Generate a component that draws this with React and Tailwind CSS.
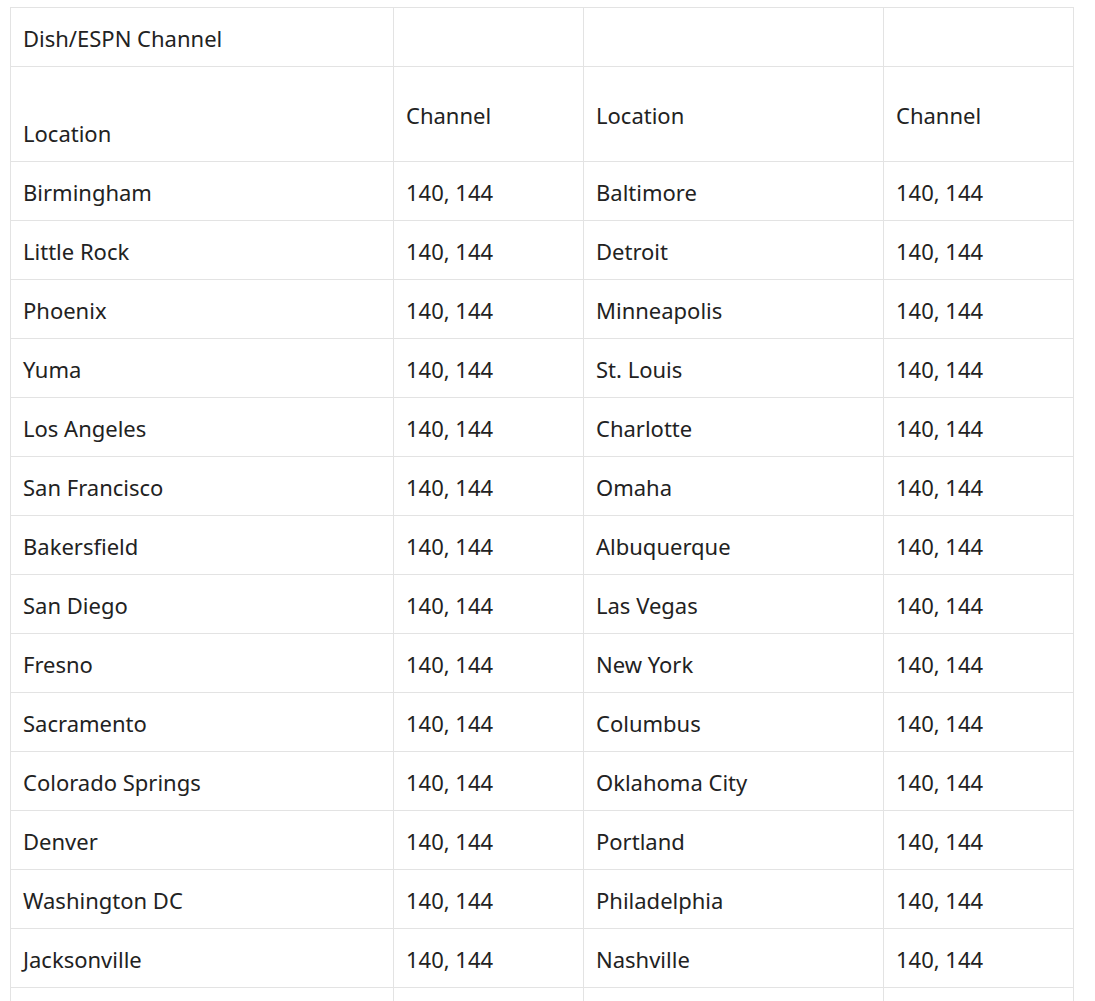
const ROWS = [
  ['Birmingham', '140, 144', 'Baltimore', '140, 144'],
  ['Little Rock', '140, 144', 'Detroit', '140, 144'],
  ['Phoenix', '140, 144', 'Minneapolis', '140, 144'],
  ['Yuma', '140, 144', 'St. Louis', '140, 144'],
  ['Los Angeles', '140, 144', 'Charlotte', '140, 144'],
  ['San Francisco', '140, 144', 'Omaha', '140, 144'],
  ['Bakersfield', '140, 144', 'Albuquerque', '140, 144'],
  ['San Diego', '140, 144', 'Las Vegas', '140, 144'],
  ['Fresno', '140, 144', 'New York', '140, 144'],
  ['Sacramento', '140, 144', 'Columbus', '140, 144'],
  ['Colorado Springs', '140, 144', 'Oklahoma City', '140, 144'],
  ['Denver', '140, 144', 'Portland', '140, 144'],
  ['Washington DC', '140, 144', 'Philadelphia', '140, 144'],
  ['Jacksonville', '140, 144', 'Nashville', '140, 144'],
];

const cell = 'border border-[#e3e3e3] px-3 pt-[2px] align-middle';

export default function App() {
  return (
    <div className="min-h-screen bg-white pt-[7px] pl-[10px] text-[#222] text-[22px] leading-[33px] [font-family:'Noto_Sans',sans-serif]">
      <table className="border-collapse w-[1063px] table-fixed">
        <colgroup>
          <col className="w-[383px]" />
          <col className="w-[190px]" />
          <col className="w-[300px]" />
          <col className="w-[190px]" />
        </colgroup>
        <tbody>
          <tr className="h-[59px]">
            <td className={cell}>Dish/ESPN Channel</td>
            <td className={cell}></td>
            <td className={cell}></td>
            <td className={cell}></td>
          </tr>
          <tr className="h-[95px]">
            <td className={`${cell} pt-[38px]`}>Location</td>
            <td className={cell}>Channel</td>
            <td className={cell}>Location</td>
            <td className={cell}>Channel</td>
          </tr>
          {ROWS.map((r) => (
            <tr key={r[0]} className="h-[59px]">
              {r.map((v, i) => (
                <td key={i} className={cell}>{v}</td>
              ))}
            </tr>
          ))}
          {/* next row runs past the bottom of the window */}
          <tr className="h-[59px]">
            <td className={cell}></td>
            <td className={cell}></td>
            <td className={cell}></td>
            <td className={cell}></td>
          </tr>
        </tbody>
      </table>
    </div>
  );
}
